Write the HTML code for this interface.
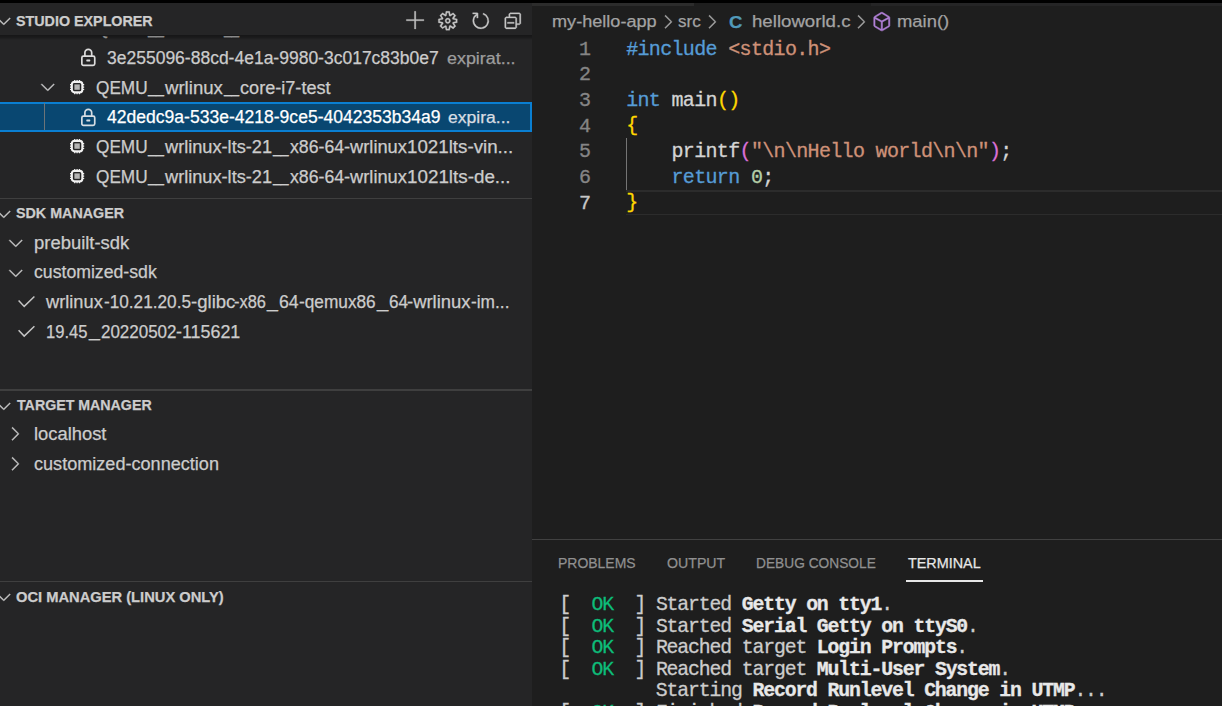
<!DOCTYPE html>
<html>
<head>
<meta charset="utf-8">
<title>Studio Explorer</title>
<style>
html,body{margin:0;padding:0;}
body{width:1222px;height:706px;overflow:hidden;background:#1e1e1e;position:relative;font-family:"Liberation Sans",sans-serif;color:#cccccc;}
div,span,svg{position:absolute;}
span span, b, .cl span, .tl span{position:static;}
.t{-webkit-text-stroke:0.25px currentColor;white-space:nowrap;transform-origin:0 50%;line-height:24px;height:24px;font-family:"Liberation Sans",sans-serif;}
.cl{-webkit-text-stroke:0.3px currentColor;white-space:pre;font-family:"Liberation Mono",monospace;color:#d4d4d4;line-height:26px;height:26px;}
.tl{-webkit-text-stroke:0.3px currentColor;white-space:pre;font-family:"Liberation Mono",monospace;color:#cccccc;line-height:22px;height:22px;}
.tl b{color:#e8e8e8;font-weight:bold;}
.ok{color:#0dbc79;}
.kw{color:#569cd6;}
.st{color:#ce9178;}
.nu{color:#b5cea8;}
.b1{color:#ffd700;}
.b2{color:#da70d6;}
svg{overflow:visible;}
</style>
</head>
<body>
<div style="left:0;top:0;width:532px;height:706px;background:#252526;"></div>
<div style="left:532px;top:0;width:690px;height:706px;background:#1e1e1e;"></div>
<div style="left:0;top:101.6px;width:532px;height:30.2px;background:#094771;box-sizing:border-box;border:2.1px solid #0a7fd2;border-left:none;"></div>
<div style="left:44.1px;top:103.4px;width:1.3px;height:26.6px;background:#6d7478;"></div>
<div style="left:0;top:197.5px;width:532px;height:1.5px;background:#3f3f3f;"></div>
<div style="left:0;top:389.3px;width:532px;height:1.5px;background:#3f3f3f;"></div>
<div style="left:0;top:580.7px;width:532px;height:1.5px;background:#3f3f3f;"></div>
<span class="t" style="left:95.78px;top:16.33px;font-size:17.50px;color:#cccccc;transform:scaleX(0.9837);">QEMU</span>
<span class="t" style="left:147.62px;top:14.93px;font-size:17.50px;color:#cccccc;transform:scaleX(0.8179);">__</span>
<span class="t" style="left:164.93px;top:16.33px;font-size:17.50px;color:#cccccc;transform:scaleX(1.0625);">wrlinux</span>
<span class="t" style="left:224.01px;top:14.93px;font-size:17.50px;color:#cccccc;transform:scaleX(0.7827);">__</span>
<span class="t" style="left:240.13px;top:16.33px;font-size:17.50px;color:#cccccc;transform:scaleX(1.0351);">core-i7-test</span>
<div style="left:0;top:0;width:532px;height:36px;background:#252526;"></div>
<div style="left:0;top:35.2px;width:532px;height:4.6px;background:linear-gradient(to bottom,rgba(0,0,0,0.40),rgba(0,0,0,0.30) 45%,rgba(0,0,0,0));"></div>
<div style="left:532px;top:0;width:161.5px;height:6.1px;background:#2c2c2c;"></div>
<div style="left:871px;top:0;width:351px;height:6.1px;background:#252526;"></div>
<span class="t" style="left:106.93px;top:46.03px;font-size:17.50px;color:#cccccc;transform:scaleX(0.9998);">3e255096-88cd-4e1a-9980-3c017c83b0e7</span>
<span class="t" style="left:446.84px;top:46.62px;font-size:15.80px;color:#9d9d9d;transform:scaleX(1.1320);">expirat...</span>
<span class="t" style="left:95.78px;top:75.73px;font-size:17.50px;color:#cccccc;transform:scaleX(0.9837);">QEMU</span>
<span class="t" style="left:147.62px;top:74.33px;font-size:17.50px;color:#cccccc;transform:scaleX(0.8179);">__</span>
<span class="t" style="left:164.93px;top:75.73px;font-size:17.50px;color:#cccccc;transform:scaleX(1.0625);">wrlinux</span>
<span class="t" style="left:224.01px;top:74.33px;font-size:17.50px;color:#cccccc;transform:scaleX(0.7827);">__</span>
<span class="t" style="left:240.13px;top:75.73px;font-size:17.50px;color:#cccccc;transform:scaleX(1.0351);">core-i7-test</span>
<span class="t" style="left:107.20px;top:105.43px;font-size:17.50px;color:#ffffff;transform:scaleX(1.0022);">42dedc9a-533e-4218-9ce5-4042353b34a9</span>
<span class="t" style="left:448.45px;top:106.02px;font-size:15.80px;color:#d8dde2;transform:scaleX(1.1111);">expira...</span>
<span class="t" style="left:95.78px;top:135.13px;font-size:17.50px;color:#cccccc;transform:scaleX(0.9837);">QEMU</span>
<span class="t" style="left:147.62px;top:133.73px;font-size:17.50px;color:#cccccc;transform:scaleX(0.8179);">__</span>
<span class="t" style="left:164.93px;top:135.13px;font-size:17.50px;color:#cccccc;transform:scaleX(1.0386);">wrlinux-lts-21</span>
<span class="t" style="left:272.81px;top:133.73px;font-size:17.50px;color:#cccccc;transform:scaleX(0.8078);">__</span>
<span class="t" style="left:290.20px;top:135.13px;font-size:17.50px;color:#cccccc;transform:scaleX(1.0112);">x86-64</span>
<span class="t" style="left:343.99px;top:135.13px;font-size:17.50px;color:#cccccc;transform:scaleX(1.0433);">-wrlinux</span>
<span class="t" style="left:407.47px;top:135.13px;font-size:17.50px;color:#cccccc;transform:scaleX(1.0707);">1021lts-vin...</span>
<span class="t" style="left:95.78px;top:164.83px;font-size:17.50px;color:#cccccc;transform:scaleX(0.9837);">QEMU</span>
<span class="t" style="left:147.62px;top:163.43px;font-size:17.50px;color:#cccccc;transform:scaleX(0.8179);">__</span>
<span class="t" style="left:164.93px;top:164.83px;font-size:17.50px;color:#cccccc;transform:scaleX(1.0386);">wrlinux-lts-21</span>
<span class="t" style="left:272.81px;top:163.43px;font-size:17.50px;color:#cccccc;transform:scaleX(0.8078);">__</span>
<span class="t" style="left:290.20px;top:164.83px;font-size:17.50px;color:#cccccc;transform:scaleX(1.0112);">x86-64</span>
<span class="t" style="left:343.99px;top:164.83px;font-size:17.50px;color:#cccccc;transform:scaleX(1.0433);">-wrlinux</span>
<span class="t" style="left:407.47px;top:164.83px;font-size:17.50px;color:#cccccc;transform:scaleX(1.0752);">1021lts-de...</span>
<span class="t" style="left:16.49px;top:8.80px;font-size:15.00px;color:#cccccc;font-weight:bold;transform:scaleX(0.9536);">STUDIO EXPLORER</span>
<span class="t" style="left:16.49px;top:201.40px;font-size:15.00px;color:#cccccc;font-weight:bold;transform:scaleX(0.9529);">SDK MANAGER</span>
<span class="t" style="left:33.71px;top:230.73px;font-size:17.50px;color:#cccccc;transform:scaleX(1.0530);">prebuilt-sdk</span>
<span class="t" style="left:34.15px;top:260.43px;font-size:17.50px;color:#cccccc;transform:scaleX(1.0094);">customized-sdk</span>
<span class="t" style="left:45.73px;top:290.13px;font-size:17.50px;color:#cccccc;transform:scaleX(1.0422);">wrlinux</span>
<span class="t" style="left:103.84px;top:290.13px;font-size:17.50px;color:#cccccc;transform:scaleX(0.9824);">-10.21.20.5</span>
<span class="t" style="left:190.87px;top:290.13px;font-size:17.50px;color:#cccccc;transform:scaleX(1.0619);">-glibc</span>
<span class="t" style="left:234.47px;top:290.13px;font-size:17.50px;color:#cccccc;transform:scaleX(0.9385);">-x86</span>
<span class="t" style="left:267.20px;top:288.73px;font-size:17.50px;color:#cccccc;transform:scaleX(1.1181);">_</span>
<span class="t" style="left:278.60px;top:290.13px;font-size:17.50px;color:#cccccc;transform:scaleX(1.0129);">64</span>
<span class="t" style="left:299.23px;top:290.13px;font-size:17.50px;color:#cccccc;transform:scaleX(0.9858);">-qemux86</span>
<span class="t" style="left:376.91px;top:288.73px;font-size:17.50px;color:#cccccc;transform:scaleX(1.1573);">_</span>
<span class="t" style="left:388.53px;top:290.13px;font-size:17.50px;color:#cccccc;transform:scaleX(0.9797);">64</span>
<span class="t" style="left:407.18px;top:290.13px;font-size:17.50px;color:#cccccc;transform:scaleX(1.0534);">-wrlinux</span>
<span class="t" style="left:471.13px;top:290.13px;font-size:17.50px;color:#cccccc;transform:scaleX(0.9886);">-im...</span>
<span class="t" style="left:46.24px;top:319.83px;font-size:17.50px;color:#cccccc;transform:scaleX(0.9466);">19.45</span>
<span class="t" style="left:88.90px;top:318.43px;font-size:17.50px;color:#cccccc;transform:scaleX(1.1181);">_</span>
<span class="t" style="left:100.55px;top:319.83px;font-size:17.50px;color:#cccccc;transform:scaleX(0.9696);">20220502</span>
<span class="t" style="left:176.01px;top:319.83px;font-size:17.50px;color:#cccccc;transform:scaleX(1.0211);">-115621</span>
<span class="t" style="left:16.74px;top:393.00px;font-size:15.00px;color:#cccccc;font-weight:bold;transform:scaleX(0.9468);">TARGET MANAGER</span>
<span class="t" style="left:33.66px;top:422.13px;font-size:17.50px;color:#cccccc;transform:scaleX(1.0491);">localhost</span>
<span class="t" style="left:34.13px;top:451.83px;font-size:17.50px;color:#cccccc;transform:scaleX(1.0333);">customized-connection</span>
<span class="t" style="left:16.30px;top:584.60px;font-size:15.00px;color:#cccccc;font-weight:bold;transform:scaleX(0.9796);">OCI MANAGER (LINUX ONLY)</span>
<span class="t" style="left:552.10px;top:9.44px;font-size:17.20px;color:#a3a3a3;transform:scaleX(1.0534);">my-hello-app</span>
<span class="t" style="left:678.13px;top:9.44px;font-size:17.20px;color:#a3a3a3;transform:scaleX(0.9914);">src</span>
<span class="t" style="left:729.14px;top:9.55px;font-size:16.30px;color:#519aba;font-weight:bold;transform:scaleX(1.1360);">C</span>
<span class="t" style="left:751.81px;top:9.44px;font-size:17.20px;color:#a3a3a3;transform:scaleX(1.0851);">helloworld.c</span>
<span class="t" style="left:896.68px;top:9.44px;font-size:17.20px;color:#a3a3a3;transform:scaleX(1.0711);">main()</span>
<span class="t" style="left:557.85px;top:551.40px;font-size:15.00px;color:#909090;transform:scaleX(0.9307);">PROBLEMS</span>
<span class="t" style="left:666.63px;top:551.40px;font-size:15.00px;color:#909090;transform:scaleX(0.9436);">OUTPUT</span>
<span class="t" style="left:756.07px;top:551.40px;font-size:15.00px;color:#909090;transform:scaleX(0.9155);">DEBUG CONSOLE</span>
<span class="t" style="left:908.38px;top:551.40px;font-size:15.00px;color:#e7e7e7;transform:scaleX(0.9586);">TERMINAL</span>
<div style="left:625.5px;top:190px;width:597px;height:25.1px;box-sizing:border-box;border-top:2px solid #2c2c2c;border-bottom:1.9px solid #2c2c2c;"></div>
<div style="left:625.7px;top:138.4px;width:1.6px;height:51.6px;background:#757575;"></div>
<span class="cl" style="left:579.00px;top:36.68px;font-size:20.00px;letter-spacing:-0.667px;color:#858585;">1</span>
<span class="cl" style="left:626.20px;top:36.68px;font-size:20.00px;letter-spacing:-0.667px;"><span class="kw">#include</span> <span class="st">&lt;stdio.h&gt;</span></span>
<span class="cl" style="left:579.00px;top:62.33px;font-size:20.00px;letter-spacing:-0.667px;color:#858585;">2</span>
<span class="cl" style="left:579.00px;top:87.98px;font-size:20.00px;letter-spacing:-0.667px;color:#858585;">3</span>
<span class="cl" style="left:626.20px;top:87.98px;font-size:20.00px;letter-spacing:-0.667px;"><span class="kw">int</span> main<span class="b1">()</span></span>
<span class="cl" style="left:579.00px;top:113.63px;font-size:20.00px;letter-spacing:-0.667px;color:#858585;">4</span>
<span class="cl" style="left:626.20px;top:112.63px;font-size:20.00px;letter-spacing:-0.667px;"><span class="b1">{</span></span>
<span class="cl" style="left:579.00px;top:139.28px;font-size:20.00px;letter-spacing:-0.667px;color:#858585;">5</span>
<span class="cl" style="left:626.20px;top:139.28px;font-size:20.00px;letter-spacing:-0.667px;">    printf<span class="b2">(</span><span class="st">"\n\nHello world\n\n"</span><span class="b2">)</span>;</span>
<span class="cl" style="left:579.00px;top:164.93px;font-size:20.00px;letter-spacing:-0.667px;color:#858585;">6</span>
<span class="cl" style="left:626.20px;top:164.93px;font-size:20.00px;letter-spacing:-0.667px;">    <span class="kw">return</span> <span class="nu">0</span>;</span>
<span class="cl" style="left:579.00px;top:190.58px;font-size:20.00px;letter-spacing:-0.667px;color:#c6c6c6;">7</span>
<span class="cl" style="left:626.20px;top:189.58px;font-size:20.00px;letter-spacing:-0.667px;"><span class="b1">}</span></span>
<div style="left:532px;top:539px;width:690px;height:1.3px;background:#414141;"></div>
<div style="left:906.3px;top:580.4px;width:76.7px;height:1.8px;background:#e7e7e7;"></div>
<span class="tl" style="left:559.30px;top:594.13px;font-size:19.80px;letter-spacing:-1.140px;">[  <span class="ok">OK</span>  ] Started <b>Getty on tty1</b>.</span>
<span class="tl" style="left:559.30px;top:615.63px;font-size:19.80px;letter-spacing:-1.140px;">[  <span class="ok">OK</span>  ] Started <b>Serial Getty on ttyS0</b>.</span>
<span class="tl" style="left:559.30px;top:637.13px;font-size:19.80px;letter-spacing:-1.140px;">[  <span class="ok">OK</span>  ] Reached target <b>Login Prompts</b>.</span>
<span class="tl" style="left:559.30px;top:658.63px;font-size:19.80px;letter-spacing:-1.140px;">[  <span class="ok">OK</span>  ] Reached target <b>Multi-User System</b>.</span>
<span class="tl" style="left:559.30px;top:680.13px;font-size:19.80px;letter-spacing:-1.140px;">         Starting <b>Record Runlevel Change in UTMP</b>...</span>
<span class="tl" style="left:559.30px;top:701.63px;font-size:19.80px;letter-spacing:-1.140px;">[  <span class="ok">OK</span>  ] Finished <b>Record Runlevel Change in UTMP</b>.</span>
<div style="left:0;top:0;width:1222px;height:2.8px;background:#000;"></div>
<svg style="left:404.90px;top:10.20px;" width="21.60" height="21.60" viewBox="0 0 16 16" fill="#c5c5c5" stroke="#c5c5c5" stroke-width="0.22"><path d="M14 7v1H8v6H7V8H1V7h6V1h1v6h6z"/></svg>
<svg style="left:437.40px;top:10.20px;" width="21.60" height="21.60" viewBox="0 0 16 16" fill="#c5c5c5" stroke="#c5c5c5" stroke-width="0.22"><path fill-rule="evenodd" clip-rule="evenodd" d="M9.1 4.4L8.6 2H7.4l-.5 2.4-.7.3-2-1.3-.9.8 1.3 2-.2.7-2.4.5v1.2l2.4.5.3.8-1.3 2 .8.8 2-1.3.8.3.4 2.3h1.2l.5-2.4.8-.3 2 1.3.8-.8-1.3-2 .3-.8 2.3-.4V7.4l-2.4-.5-.3-.8 1.3-2-.8-.8-2 1.3-.7-.2zM9.4 1l.5 2.4L12 2.1l2 2-1.4 2.1 2.4.4v2.8l-2.4.5L14 12l-2 2-2.1-1.4-.5 2.4H6.6l-.5-2.4L4 13.9l-2-2 1.4-2.1L1 9.4V6.6l2.4-.5L2.1 4l2-2 2.1 1.4.4-2.4h2.8zm.6 7c0 1.1-.9 2-2 2s-2-.9-2-2 .9-2 2-2 2 .9 2 2zM8 9c.6 0 1-.4 1-1s-.4-1-1-1-1 .4-1 1 .4 1 1 1z"/></svg>
<svg style="left:469.50px;top:10.20px;" width="21.60" height="21.60" viewBox="0 0 16 16" fill="#c5c5c5" stroke="#c5c5c5" stroke-width="0.22"><path fill-rule="evenodd" clip-rule="evenodd" d="M4.681 3H2V2h3.5l.5.5V6H5V4a5 5 0 1 0 4.53-.761l.302-.954A6 6 0 1 1 4.681 3z"/></svg>
<svg style="left:502.00px;top:10.20px;" width="21.60" height="21.60" viewBox="0 0 16 16" fill="#c5c5c5" stroke="#c5c5c5" stroke-width="0.22"><path fill-rule="evenodd" clip-rule="evenodd" d="M9 9H4v1h5V9z"/><path fill-rule="evenodd" clip-rule="evenodd" d="M5 3l1-1h7l1 1v7l-1 1h-2v2l-1 1H3l-1-1V6l1-1h2V3zm1 2h4l1 1v4h2V3H6v2zm4 1H3v7h7V6z"/></svg>
<svg style="left:-7.50px;top:9.81px;" width="21.60" height="21.60" viewBox="0 0 16 16" fill="#c5c5c5" stroke="#c5c5c5" stroke-width="0.22"><path d="M7.976 10.072l4.357-4.357.62.618L8.284 11h-.618L3 6.333l.619-.618 4.357 4.357z"/></svg>
<svg style="left:-7.50px;top:203.21px;" width="21.60" height="21.60" viewBox="0 0 16 16" fill="#c5c5c5" stroke="#c5c5c5" stroke-width="0.22"><path d="M7.976 10.072l4.357-4.357.62.618L8.284 11h-.618L3 6.333l.619-.618 4.357 4.357z"/></svg>
<svg style="left:-7.50px;top:394.61px;" width="21.60" height="21.60" viewBox="0 0 16 16" fill="#c5c5c5" stroke="#c5c5c5" stroke-width="0.22"><path d="M7.976 10.072l4.357-4.357.62.618L8.284 11h-.618L3 6.333l.619-.618 4.357 4.357z"/></svg>
<svg style="left:-7.50px;top:586.11px;" width="21.60" height="21.60" viewBox="0 0 16 16" fill="#c5c5c5" stroke="#c5c5c5" stroke-width="0.22"><path d="M7.976 10.072l4.357-4.357.62.618L8.284 11h-.618L3 6.333l.619-.618 4.357 4.357z"/></svg>
<svg style="left:36.93px;top:76.41px;" width="21.60" height="21.60" viewBox="0 0 16 16" fill="#c5c5c5" stroke="#c5c5c5" stroke-width="0.22"><path d="M7.976 10.072l4.357-4.357.62.618L8.284 11h-.618L3 6.333l.619-.618 4.357 4.357z"/></svg>
<svg style="left:4.63px;top:232.21px;" width="21.60" height="21.60" viewBox="0 0 16 16" fill="#c5c5c5" stroke="#c5c5c5" stroke-width="0.22"><path d="M7.976 10.072l4.357-4.357.62.618L8.284 11h-.618L3 6.333l.619-.618 4.357 4.357z"/></svg>
<svg style="left:4.63px;top:261.71px;" width="21.60" height="21.60" viewBox="0 0 16 16" fill="#c5c5c5" stroke="#c5c5c5" stroke-width="0.22"><path d="M7.976 10.072l4.357-4.357.62.618L8.284 11h-.618L3 6.333l.619-.618 4.357 4.357z"/></svg>
<svg style="left:4.41px;top:423.07px;" width="21.60" height="21.60" viewBox="0 0 16 16" fill="#c5c5c5" stroke="#c5c5c5" stroke-width="0.22"><path d="M10.072 8.024L5.715 3.667l.618-.62L11 7.716v.618L6.333 13l-.618-.619 4.357-4.357z"/></svg>
<svg style="left:4.41px;top:452.77px;" width="21.60" height="21.60" viewBox="0 0 16 16" fill="#c5c5c5" stroke="#c5c5c5" stroke-width="0.22"><path d="M10.072 8.024L5.715 3.667l.618-.62L11 7.716v.618L6.333 13l-.618-.619 4.357-4.357z"/></svg>
<svg style="left:656.61px;top:11.17px;" width="21.60" height="21.60" viewBox="0 0 16 16" fill="#a3a3a3" stroke="#a3a3a3" stroke-width="0.22"><path d="M10.072 8.024L5.715 3.667l.618-.62L11 7.716v.618L6.333 13l-.618-.619 4.357-4.357z"/></svg>
<svg style="left:701.31px;top:11.17px;" width="21.60" height="21.60" viewBox="0 0 16 16" fill="#a3a3a3" stroke="#a3a3a3" stroke-width="0.22"><path d="M10.072 8.024L5.715 3.667l.618-.62L11 7.716v.618L6.333 13l-.618-.619 4.357-4.357z"/></svg>
<svg style="left:849.71px;top:11.17px;" width="21.60" height="21.60" viewBox="0 0 16 16" fill="#a3a3a3" stroke="#a3a3a3" stroke-width="0.22"><path d="M10.072 8.024L5.715 3.667l.618-.62L11 7.716v.618L6.333 13l-.618-.619 4.357-4.357z"/></svg>
<svg style="left:871.40px;top:10.70px;" width="21.60" height="21.60" viewBox="0 0 16 16" fill="#b180d7" stroke="#b180d7" stroke-width="0.35"><path fill-rule="evenodd" clip-rule="evenodd" d="M13.51 4l-5-3h-1l-5 3-.49.86v6l.49.85 5 3h1l5-3 .49-.85v-6L13.51 4zm-6 9.56l-4.5-2.7V5.700l4.5 2.45v5.410zM3.27 4.700l4.74-2.840 4.740 2.840-4.740 2.590L3.27 4.700zm9.740 6.160l-4.500 2.700V8.150l4.500-2.450v5.160z"/></svg>
<svg style="left:0;top:0;" width="60" height="400" viewBox="0 0 60 400" fill="none" stroke="#c5c5c5" stroke-width="1.5"><polyline points="18.6,300.6 24.2,306.4 34.4,296.5"/></svg>
<svg style="left:0;top:0;" width="60" height="400" viewBox="0 0 60 400" fill="none" stroke="#c5c5c5" stroke-width="1.5"><polyline points="18.6,330.3 24.2,336.1 34.4,326.2"/></svg>
<svg style="left:80.90px;top:48.40px;" width="14.6" height="18.3" viewBox="0 0 14.6 18.3" fill="none" stroke="#dcdcdc" stroke-width="1.7"><rect x="0.85" y="8.2" width="12.9" height="9.2" rx="1.6"/><path d="M3.9 8.2V4.7a3.4 3.4 0 0 1 6.8 0V8.2"/><rect x="5.3" y="11.6" width="4" height="1.8" rx="0.6" fill="#dcdcdc" stroke="none"/></svg>
<svg style="left:80.90px;top:107.80px;" width="14.6" height="18.3" viewBox="0 0 14.6 18.3" fill="none" stroke="#d6dde3" stroke-width="1.7"><rect x="0.85" y="8.2" width="12.9" height="9.2" rx="1.6"/><path d="M3.9 8.2V4.7a3.4 3.4 0 0 1 6.8 0V8.2"/><rect x="5.3" y="11.6" width="4" height="1.8" rx="0.6" fill="#d6dde3" stroke="none"/></svg>
<svg style="left:70.20px;top:79.85px;" width="14.2" height="14.2" viewBox="0 0 14.2 14.2" fill="none" stroke="#f2f2f2"><rect x="1.85" y="1.85" width="10.5" height="10.5" rx="2.6" stroke-width="2.1"/><g stroke-width="1.15"><path d="M4.7 0v1.2M4.7 13v1.2M0 4.7h1.2M13 4.7h1.2"/><path d="M7.1 0v1.2M7.1 13v1.2M0 7.1h1.2M13 7.1h1.2"/><path d="M9.5 0v1.2M9.5 13v1.2M0 9.5h1.2M13 9.5h1.2"/></g><rect x="4.4" y="4.4" width="5.4" height="5.4" fill="#b4b4b4" stroke="none"/></svg>
<svg style="left:70.20px;top:139.25px;" width="14.2" height="14.2" viewBox="0 0 14.2 14.2" fill="none" stroke="#f2f2f2"><rect x="1.85" y="1.85" width="10.5" height="10.5" rx="2.6" stroke-width="2.1"/><g stroke-width="1.15"><path d="M4.7 0v1.2M4.7 13v1.2M0 4.7h1.2M13 4.7h1.2"/><path d="M7.1 0v1.2M7.1 13v1.2M0 7.1h1.2M13 7.1h1.2"/><path d="M9.5 0v1.2M9.5 13v1.2M0 9.5h1.2M13 9.5h1.2"/></g><rect x="4.4" y="4.4" width="5.4" height="5.4" fill="#b4b4b4" stroke="none"/></svg>
<svg style="left:70.20px;top:168.95px;" width="14.2" height="14.2" viewBox="0 0 14.2 14.2" fill="none" stroke="#f2f2f2"><rect x="1.85" y="1.85" width="10.5" height="10.5" rx="2.6" stroke-width="2.1"/><g stroke-width="1.15"><path d="M4.7 0v1.2M4.7 13v1.2M0 4.7h1.2M13 4.7h1.2"/><path d="M7.1 0v1.2M7.1 13v1.2M0 7.1h1.2M13 7.1h1.2"/><path d="M9.5 0v1.2M9.5 13v1.2M0 9.5h1.2M13 9.5h1.2"/></g><rect x="4.4" y="4.4" width="5.4" height="5.4" fill="#b4b4b4" stroke="none"/></svg>
</body>
</html>
